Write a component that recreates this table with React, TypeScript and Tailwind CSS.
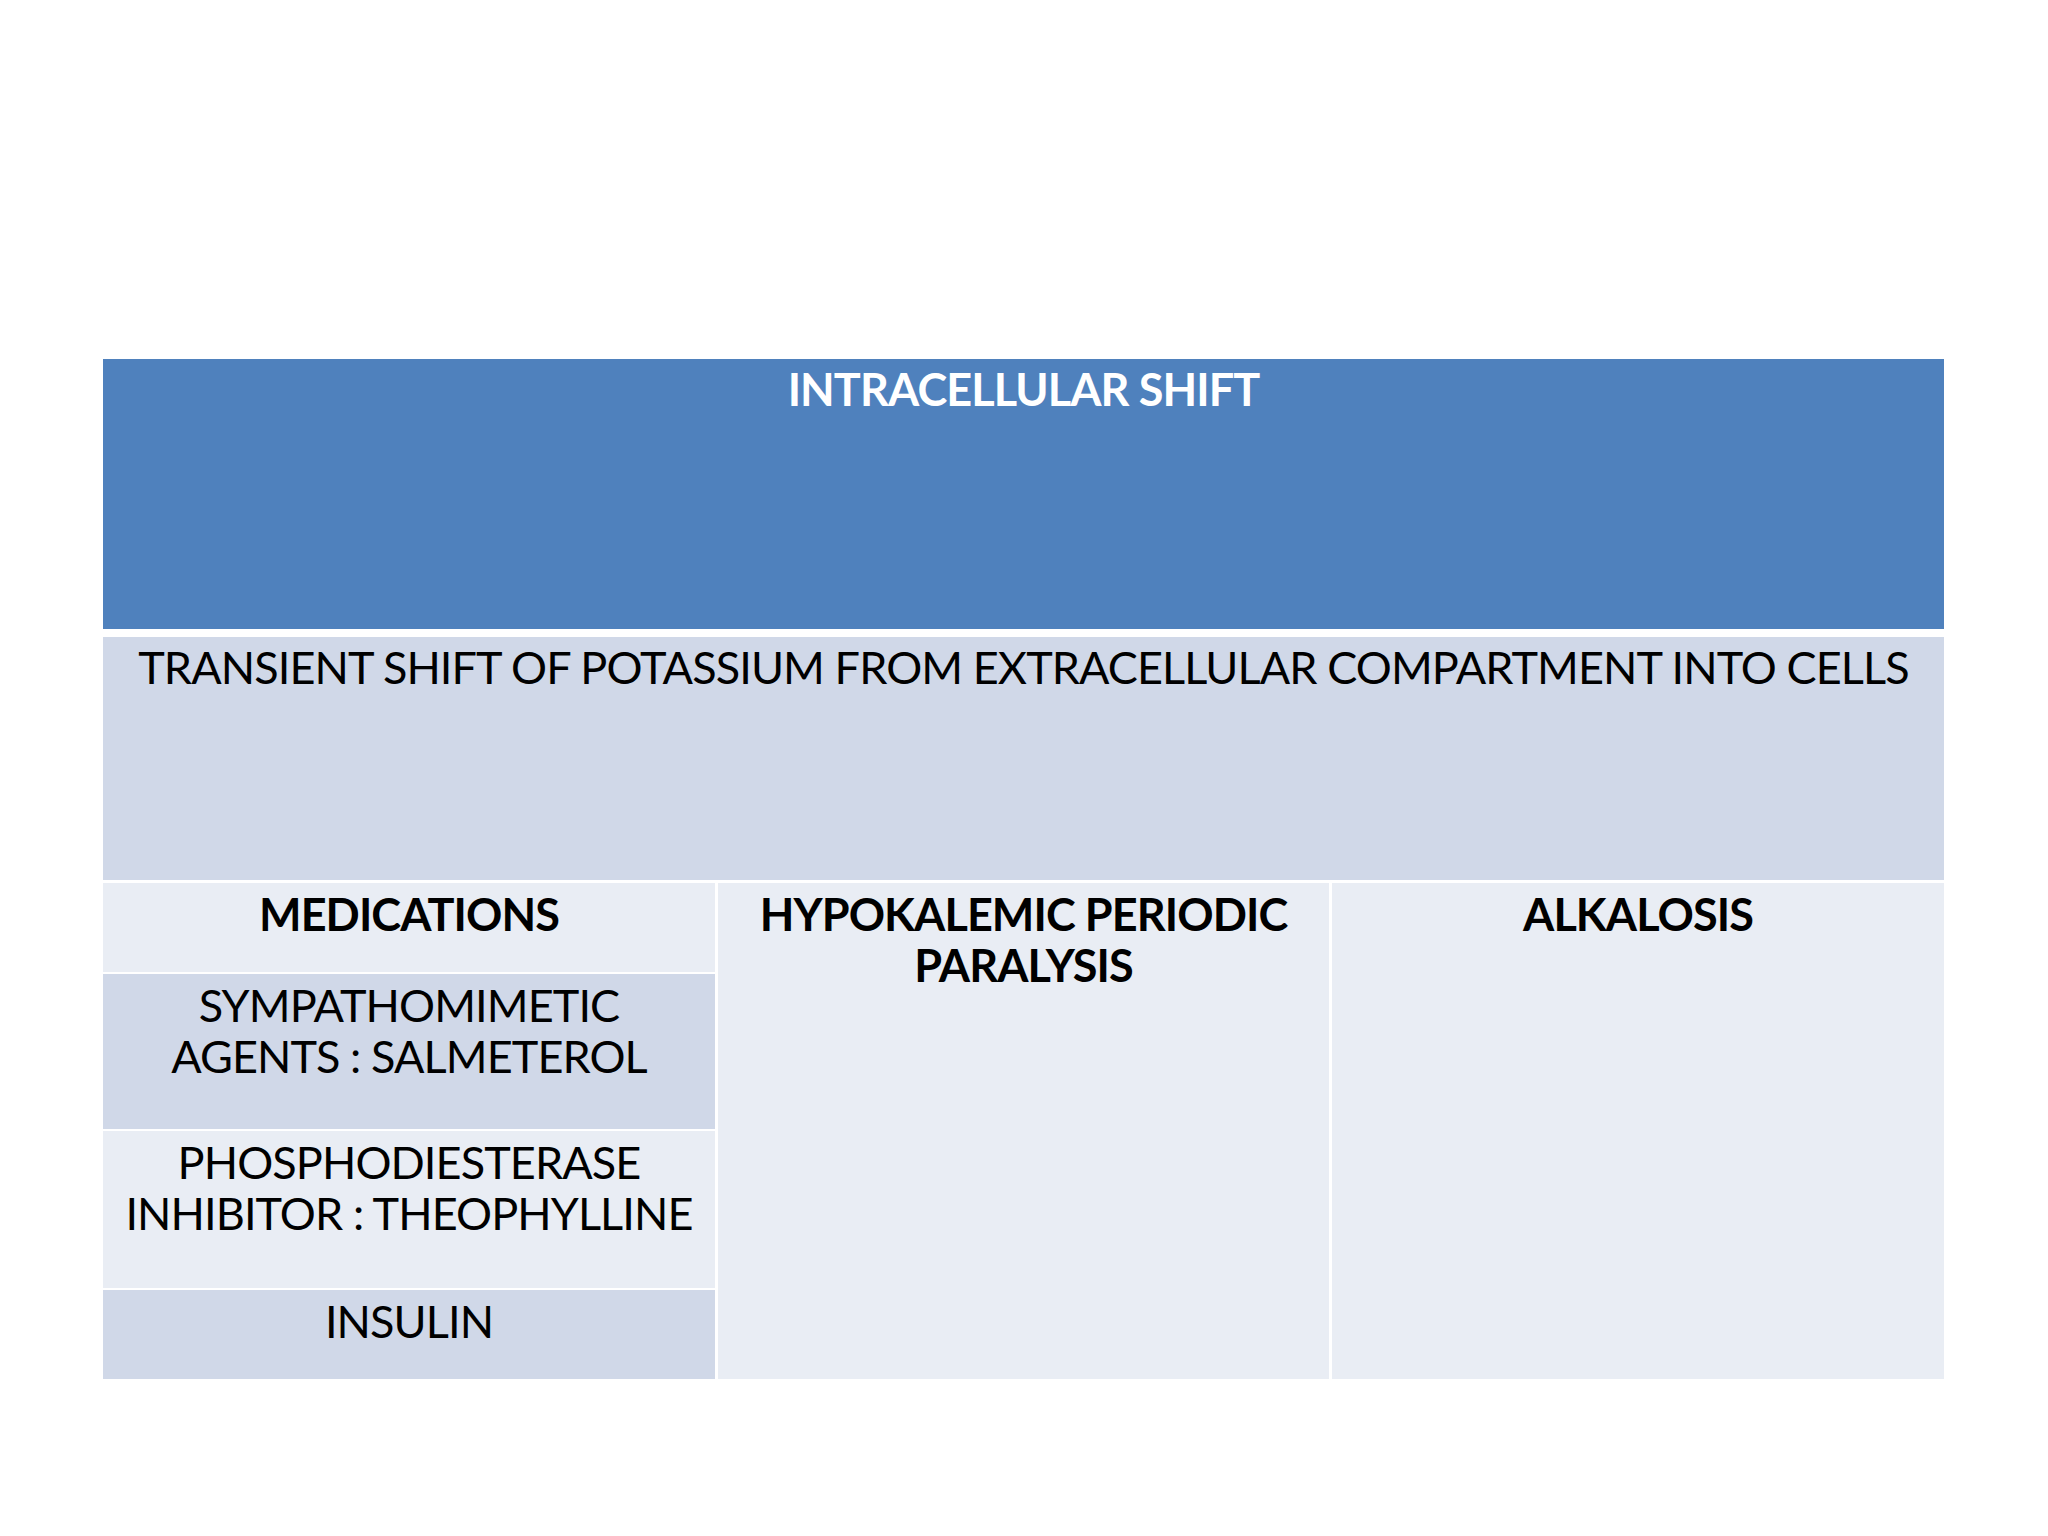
import React from "react";

export default function App() {
  return (
    <div
      className="w-[2048px] h-[1536px] bg-white relative"
      style={{ fontFamily: "Lato, 'Open Sans', sans-serif" }}
    >
      <div className="pt-[359px] pl-[103px]">
        <div className="w-[1841px] flex flex-col text-black text-[45px] leading-[51px] tracking-[-0.9px]">
          <div className="h-[270px] bg-[#4F81BD] text-white font-bold text-center pt-[5px]">
            INTRACELLULAR SHIFT
          </div>
          <div className="h-[243px] mt-[8px] bg-[#D0D8E8] text-center pt-[5px] whitespace-nowrap">
            TRANSIENT SHIFT OF POTASSIUM FROM EXTRACELLULAR COMPARTMENT INTO CELLS
          </div>
          <div className="h-[496px] mt-[3px] flex gap-[3px]">
            <div className="w-[612px] flex flex-col gap-[2px]">
              <div className="h-[89px] bg-[#E9EDF4] text-center font-bold pt-[6px]">
                MEDICATIONS
              </div>
              <div className="h-[155px] bg-[#D0D8E8] text-center pt-[6px]">
                SYMPATHOMIMETIC
                <br />
                AGENTS : SALMETEROL
              </div>
              <div className="h-[157px] bg-[#E9EDF4] text-center pt-[6px]">
                PHOSPHODIESTERASE
                <br />
                INHIBITOR : THEOPHYLLINE
              </div>
              <div className="h-[89px] bg-[#D0D8E8] text-center pt-[6px]">
                INSULIN
              </div>
            </div>
            <div className="w-[611px] bg-[#E9EDF4] text-center font-bold pt-[6px]">
              HYPOKALEMIC PERIODIC
              <br />
              PARALYSIS
            </div>
            <div className="w-[612px] bg-[#E9EDF4] text-center font-bold pt-[6px]">
              ALKALOSIS
            </div>
          </div>
        </div>
      </div>
    </div>
  );
}
